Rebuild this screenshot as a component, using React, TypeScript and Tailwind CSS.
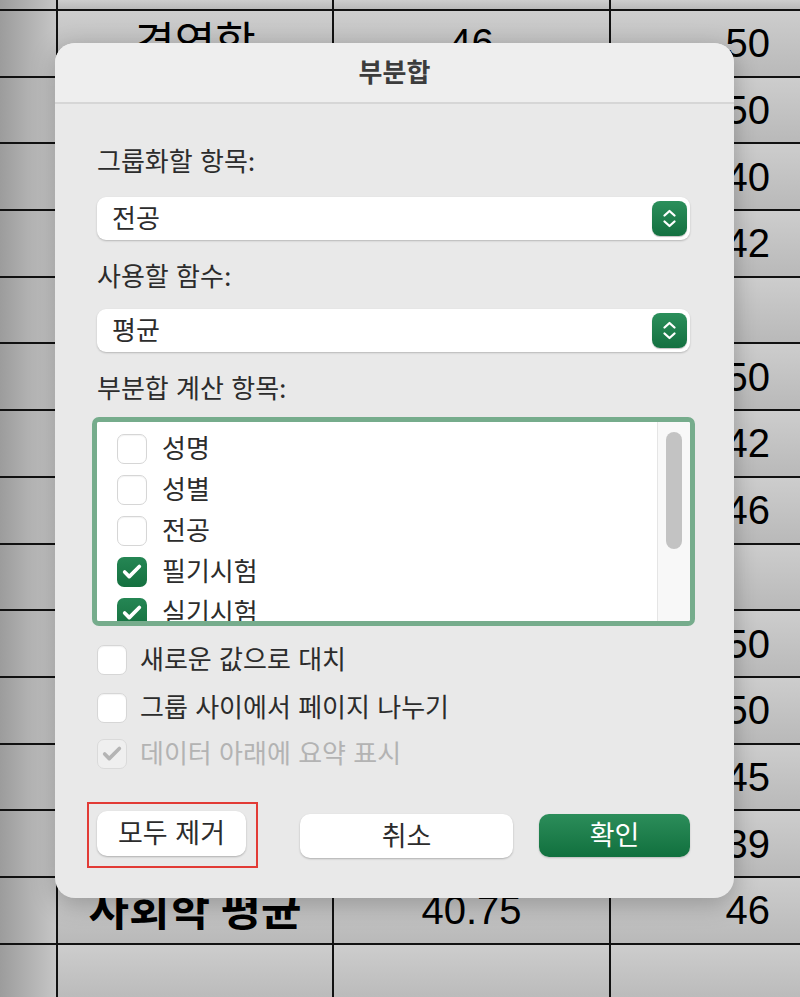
import { Check } from "lucide-react";

const KR = "font-['Inter','Noto_Sans_CJK_KR',sans-serif]";

type Row = { h: string; name?: string; mid?: string; right?: string; bold?: boolean };

const rows: Row[] = [
  { h: "h-[11px]" },
  { h: "h-[66.7px]", name: "경영학", mid: "46", right: "50" },
  { h: "h-[66.7px]", right: "50" },
  { h: "h-[66.7px]", right: "40" },
  { h: "h-[66.7px]", right: "42" },
  { h: "h-[66.7px]" },
  { h: "h-[66.7px]", right: "50" },
  { h: "h-[66.7px]", right: "42" },
  { h: "h-[66.7px]", right: "46" },
  { h: "h-[66.7px]" },
  { h: "h-[66.7px]", right: "50" },
  { h: "h-[66.7px]", right: "50" },
  { h: "h-[66.7px]", right: "45" },
  { h: "h-[66.7px]", right: "39" },
  { h: "h-[66.7px]", name: "사회학 평균", mid: "40.75", right: "46", bold: true },
  { h: "h-[60px]" },
];

function Sheet() {
  return (
    <div className="flex flex-col">
      {rows.map((r, i) => (
        <div
          key={i}
          className={`grid grid-cols-[58px_276px_277px_1fr] border-b-2 border-[#111] ${r.h}`}
        >
          <div className="border-r-2 border-[#111] bg-gradient-to-r from-[#9c9c9c] to-[#c6c6c6]" />
          <div
            className={`flex items-center justify-center overflow-hidden border-r-2 border-[#111] bg-gradient-to-b from-[#cdcdcd] to-[#b9b9b9] text-[44px] leading-none text-black ${KR} ${
              r.bold ? "font-bold" : ""
            }`}
          >
            {r.name}
          </div>
          <div className="flex items-center justify-center overflow-hidden border-r-2 border-[#111] bg-gradient-to-b from-[#cdcdcd] to-[#b9b9b9] font-['Liberation_Sans',sans-serif] text-[40px] leading-none text-black">
            {r.mid}
          </div>
          <div className="flex items-center justify-end overflow-hidden bg-gradient-to-b from-[#cdcdcd] to-[#b9b9b9] pr-[30px] font-['Liberation_Sans',sans-serif] text-[40px] leading-none text-black">
            {r.right}
          </div>
        </div>
      ))}
    </div>
  );
}

function Stepper() {
  return (
    <div className="flex h-[35px] w-[35px] items-center justify-center rounded-[8px] bg-gradient-to-b from-[#2b8f5b] to-[#137040] shadow-[0_1px_1px_rgba(0,0,0,0.25)]">
      <svg width="35" height="35" viewBox="0 0 35 35" fill="none">
        <path d="M12.5 14.5 L17.5 10 L22.5 14.5" stroke="white" strokeWidth="2.3" strokeLinecap="round" strokeLinejoin="round" />
        <path d="M12.5 20.5 L17.5 25 L22.5 20.5" stroke="white" strokeWidth="2.3" strokeLinecap="round" strokeLinejoin="round" />
      </svg>
    </div>
  );
}

function Select({ value }: { value: string }) {
  return (
    <div className="flex h-[43px] items-center justify-between rounded-[9px] bg-white pl-[15px] pr-[3px] shadow-[0_1px_2px_rgba(0,0,0,0.22)]">
      <span className="text-[26px] leading-none text-[#2c2c2c]">{value}</span>
      <Stepper />
    </div>
  );
}

function Box({ checked = false, disabled = false }: { checked?: boolean; disabled?: boolean }) {
  if (checked && !disabled) {
    return (
      <div className="flex h-[30px] w-[30px] shrink-0 items-center justify-center rounded-[7px] bg-gradient-to-b from-[#258654] to-[#14703f]">
        <Check className="h-[22px] w-[22px] text-white" strokeWidth={4} />
      </div>
    );
  }
  if (disabled) {
    return (
      <div className="flex h-[30px] w-[30px] shrink-0 items-center justify-center rounded-[7px] border border-[#dadada] bg-[#efefef]">
        <Check className="h-[22px] w-[22px] text-[#b4b4b4]" strokeWidth={4} />
      </div>
    );
  }
  return (
    <div className="h-[30px] w-[30px] shrink-0 rounded-[7px] border border-[#d6d6d6] bg-white shadow-[inset_0_1px_1px_rgba(0,0,0,0.05)]" />
  );
}

const items = [
  { label: "성명", checked: false },
  { label: "성별", checked: false },
  { label: "전공", checked: false },
  { label: "필기시험", checked: true },
  { label: "실기시험", checked: true },
];

function ListBox() {
  return (
    <div className="-mx-[5px] mt-[14px] h-[209px] overflow-hidden rounded-[7px] border-[5px] border-[#76ac8c]">
      <div className="flex h-full bg-white">
        <div className="flex-1 overflow-hidden pl-[20px] pt-[6px]">
          {items.map((it) => (
            <div key={it.label} className="flex h-[41px] items-center gap-[15px]">
              <Box checked={it.checked} />
              <span className="text-[26px] leading-none text-[#2c2c2c]">{it.label}</span>
            </div>
          ))}
        </div>
        <div className="w-[33px] border-l border-[#e5e5e5] bg-[#f8f8f8] px-[8px] pt-[10px]">
          <div className="h-[117px] rounded-full bg-[#c3c3c3]" />
        </div>
      </div>
    </div>
  );
}

function Option({ label, disabled = false, checked = false, cls }: { label: string; disabled?: boolean; checked?: boolean; cls: string }) {
  return (
    <div className={`flex h-[30px] items-center gap-[13px] ${cls}`}>
      <Box disabled={disabled} checked={checked} />
      <span className={`text-[26px] leading-none ${disabled ? "text-[#b3b3b3]" : "text-[#2c2c2c]"}`}>{label}</span>
    </div>
  );
}

function Dialog() {
  return (
    <div className={`absolute left-[55px] top-[43px] flex h-[855px] w-[679px] flex-col overflow-hidden rounded-[20px] bg-[#e9e9e9] shadow-[0_6px_24px_rgba(0,0,0,0.25)] ${KR}`}>
      <div className="flex h-[61px] items-center justify-center border-b-2 border-[#d6d6d6] bg-[#eeeeee]">
        <span className="text-[26px] font-semibold leading-none text-[#3c3c3c]">부분합</span>
      </div>
      <div className="flex flex-col pl-[42px] pr-[44px] pt-[44px]">
        <div className="h-[28px] text-[26px] leading-[28px] text-[#2c2c2c]">그룹화할 항목:</div>
        <div className="mt-[21px]">
          <Select value="전공" />
        </div>
        <div className="mt-[23px] h-[28px] text-[26px] leading-[28px] text-[#2c2c2c]">사용할 함수:</div>
        <div className="mt-[18px]">
          <Select value="평균" />
        </div>
        <div className="mt-[23px] h-[28px] text-[26px] leading-[28px] text-[#2c2c2c]">부분합 계산 항목:</div>
        <ListBox />
        <Option cls="mt-[19px]" label="새로운 값으로 대치" />
        <Option cls="mt-[18px]" label="그룹 사이에서 페이지 나누기" />
        <Option cls="mt-[16px]" label="데이터 아래에 요약 표시" disabled checked />
        <div className="mt-[42px] flex items-start">
          <div className="relative">
            <div className="absolute -left-[10px] -top-[9px] h-[66px] w-[171px] border-2 border-[#e23b36]" />
            <div className="flex h-[45px] w-[149px] items-center justify-center rounded-[10px] bg-white text-[27px] leading-none text-[#2c2c2c] shadow-[0_1px_2px_rgba(0,0,0,0.25)]">
              모두 제거
            </div>
          </div>
          <div className="ml-[54px] mt-[3px] flex h-[44px] w-[213px] items-center justify-center rounded-[10px] bg-white text-[27px] leading-none text-[#2c2c2c] shadow-[0_1px_2px_rgba(0,0,0,0.25)]">
            취소
          </div>
          <div className="ml-[26px] mt-[3px] flex h-[43px] w-[151px] items-center justify-center rounded-[10px] bg-gradient-to-b from-[#2b8d5a] to-[#10703e] text-[27px] leading-none text-white shadow-[0_1px_2px_rgba(0,0,0,0.2)]">
            확인
          </div>
        </div>
      </div>
    </div>
  );
}

export default function App() {
  return (
    <div className="relative h-[997px] w-[800px] overflow-hidden bg-[#bdbdbd]">
      <Sheet />
      <Dialog />
    </div>
  );
}
